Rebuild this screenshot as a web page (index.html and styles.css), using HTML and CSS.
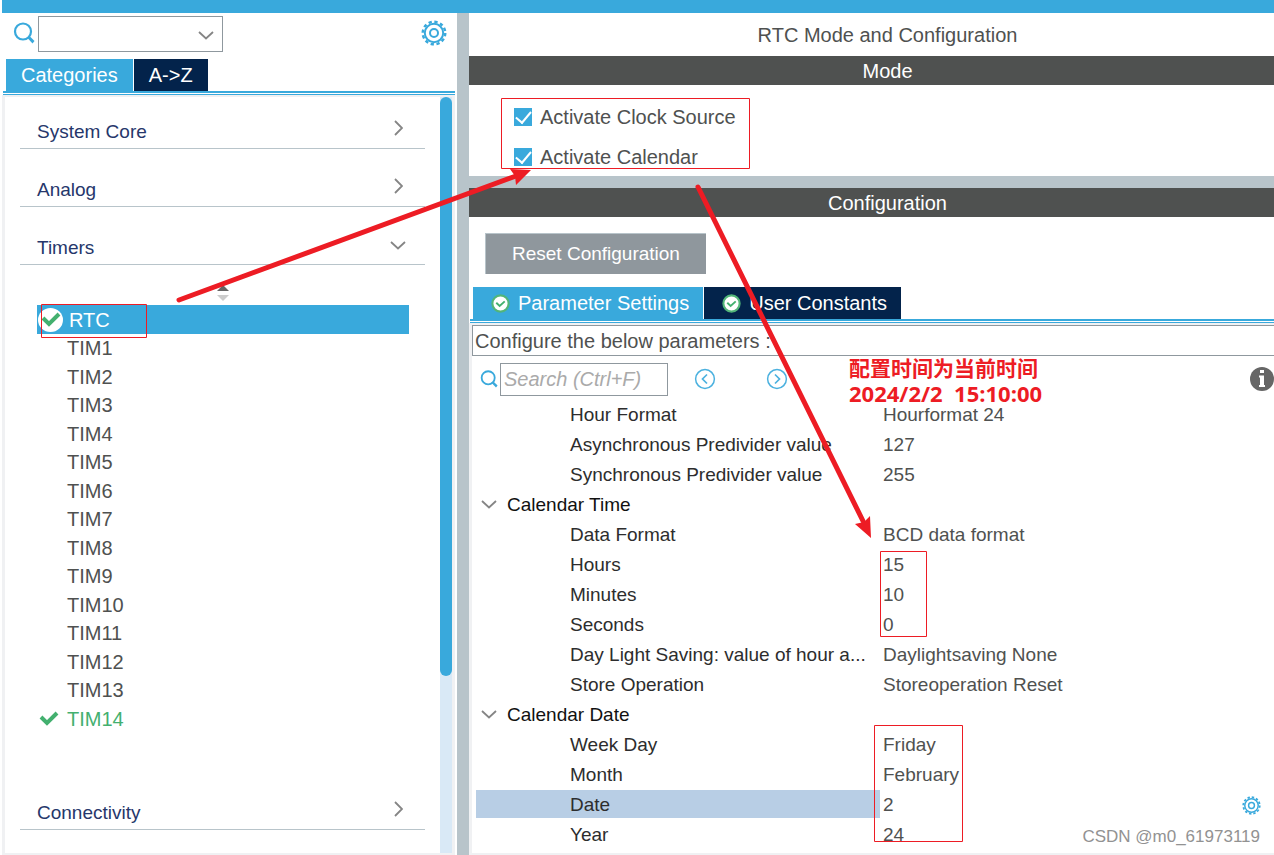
FILE: index.html
```html
<!DOCTYPE html>
<html lang="en">
<head>
<meta charset="utf-8">
<title>RTC Mode and Configuration</title>
<link rel="stylesheet" href="styles.css">
</head>
<body>
<svg class="defs" aria-hidden="true">
  <symbol id="search" viewBox="0 0 22 22"><circle cx="10" cy="9.500" r="8" fill="none" stroke="#39a9dc" stroke-width="2.200"/><path d="M14 15.500l2.500-1.500 5 5-2 2.500z" fill="#39a9dc"/></symbol>
  <symbol id="gear" viewBox="0 0 26 26"><circle cx="13" cy="13" r="11.300" fill="none" stroke="#39a9dc" stroke-width="2.400" stroke-dasharray="3.300 2.617"/><circle cx="13" cy="13" r="9.200" fill="none" stroke="#39a9dc" stroke-width="2"/><circle cx="13" cy="13" r="4" fill="none" stroke="#39a9dc" stroke-width="2"/></symbol>
  <symbol id="down" viewBox="0 0 16 9"><path d="M1 1l7 6.500L15 1" fill="none" stroke="#858585" stroke-width="1.800"/></symbol>
  <symbol id="right" viewBox="0 0 9 16"><path d="M1 1l7 7-7 7" fill="none" stroke="#858585" stroke-width="1.800"/></symbol>
  <symbol id="tick" viewBox="0 0 20 16"><path d="M2 6l6 6L18 2" fill="none" stroke="#43b06f" stroke-width="4"/></symbol>
  <symbol id="ok" viewBox="0 0 18 18"><circle cx="9" cy="9" r="7.700" fill="#fff" stroke="#52b579" stroke-width="2"/><path d="M5 8.300l3.200 3L13 7" fill="none" stroke="#43b06f" stroke-width="1.800"/></symbol>
  <symbol id="prev" viewBox="0 0 22 22"><circle cx="11" cy="11" r="9.400" fill="none" stroke="#4bb1df" stroke-width="1.500"/><path d="M13 6.500L8.500 11l4.500 4.500" fill="none" stroke="#4bb1df" stroke-width="1.700"/></symbol>
</svg>
<div class="app">
  <header class="topbar"></header>
  <aside class="sidebar">
    <div class="finder">
      <svg class="ic-search"><use href="#search"/></svg>
      <span class="combo"><select aria-label="Find peripheral"><option></option></select><svg class="chev-down"><use href="#down"/></svg></span>
      <button class="icon-btn finder-gear" aria-label="Settings"><svg class="ic-gear"><use href="#gear"/></svg></button>
    </div>
    <div class="tabs side-tabs"><button class="tab active">Categories</button><button class="tab">A-&gt;Z</button></div>
    <div class="side-body">
      <nav class="tree">
        <button class="category">System Core<svg class="chev-right"><use href="#right"/></svg></button>
        <button class="category">Analog<svg class="chev-right"><use href="#right"/></svg></button>
        <button class="category">Timers<svg class="chev-down"><use href="#down"/></svg></button>
        <div class="timers">
          <button class="sorter" aria-label="Sort"><svg viewBox="0 0 12 16"><path d="M6 0l6 6H0z" fill="#666"/><path d="M0 10h12l-6 6z" fill="#ccc"/></svg></button>
          <ul>
            <li><button class="item selected"><span class="mark round"><svg class="ic-tick"><use href="#tick"/></svg></span>RTC</button></li>
            <li><button class="item">TIM1</button></li>
            <li><button class="item">TIM2</button></li>
            <li><button class="item">TIM3</button></li>
            <li><button class="item">TIM4</button></li>
            <li><button class="item">TIM5</button></li>
            <li><button class="item">TIM6</button></li>
            <li><button class="item">TIM7</button></li>
            <li><button class="item">TIM8</button></li>
            <li><button class="item">TIM9</button></li>
            <li><button class="item">TIM10</button></li>
            <li><button class="item">TIM11</button></li>
            <li><button class="item">TIM12</button></li>
            <li><button class="item">TIM13</button></li>
            <li><button class="item enabled"><span class="mark"><svg class="ic-tick"><use href="#tick"/></svg></span>TIM14</button></li>
          </ul>
        </div>
        <button class="category">Connectivity<svg class="chev-right"><use href="#right"/></svg></button>
      </nav>
      <div class="track"><div class="thumb"></div></div>
    </div>
  </aside>
  <div class="splitter"></div>
  <main class="pane">
    <h1>RTC Mode and Configuration</h1>
    <h2>Mode</h2>
    <div class="mode">
      <label><input type="checkbox" checked>Activate Clock Source</label>
      <label><input type="checkbox" checked>Activate Calendar</label>
    </div>
    <div class="hsplit"></div>
    <h2>Configuration</h2>
    <div class="actions"><button class="reset">Reset Configuration</button></div>
    <div class="tabs param-tabs">
      <button class="tab active"><svg class="ic-ok"><use href="#ok"/></svg>Parameter Settings</button><button class="tab"><svg class="ic-ok"><use href="#ok"/></svg>User Constants</button>
    </div>
    <section class="params">
      <p class="hint">Configure the below parameters :</p>
      <div class="search-row">
        <svg class="ic-small"><use href="#search"/></svg>
        <input type="text" placeholder="Search (Ctrl+F)" aria-label="Search parameters">
        <button class="icon-btn prev" aria-label="Previous"><svg class="ic-nav"><use href="#prev"/></svg></button>
        <button class="icon-btn next" aria-label="Next"><svg class="ic-nav flip"><use href="#prev"/></svg></button>
        <button class="icon-btn info" aria-label="Information"><svg class="ic-info" viewBox="0 0 26 26"><circle cx="13" cy="13" r="12" fill="#666"/><path d="M11 4h4v3h-4zM10 9.500h5V19h1v2h-6v-2h1v-7.500h-1z" fill="#fff"/></svg></button>
      </div>
      <table>
        <colgroup><col class="c-name"><col></colgroup>
        <tbody>
          <tr><td>Hour Format</td><td>Hourformat 24</td></tr>
          <tr><td>Asynchronous Predivider value</td><td>127</td></tr>
          <tr><td>Synchronous Predivider value</td><td>255</td></tr>
          <tr class="group"><th colspan="2"><svg class="chev-down"><use href="#down"/></svg>Calendar Time</th></tr>
          <tr><td>Data Format</td><td>BCD data format</td></tr>
          <tr><td>Hours</td><td>15</td></tr>
          <tr><td>Minutes</td><td>10</td></tr>
          <tr><td>Seconds</td><td>0</td></tr>
          <tr><td>Day Light Saving: value of hour a...</td><td>Daylightsaving None</td></tr>
          <tr><td>Store Operation</td><td>Storeoperation Reset</td></tr>
          <tr class="group"><th colspan="2"><svg class="chev-down"><use href="#down"/></svg>Calendar Date</th></tr>
          <tr><td>Week Day</td><td>Friday</td></tr>
          <tr><td>Month</td><td>February</td></tr>
          <tr class="current"><td>Date</td><td><div class="value">2<button class="icon-btn" aria-label="Edit"><svg class="ic-cog"><use href="#gear"/></svg></button></div></td></tr>
          <tr><td>Year</td><td>24</td></tr>
        </tbody>
      </table>
    </section>
  </main>
  <svg class="marks" width="1274" height="855" viewBox="0 0 1274 855" aria-hidden="true">
    <g fill="none" stroke="#ed1c24">
      <path d="M501.500 98.500h248v70h-248zM41.500 304.500h105v33h-105zM880.500 551.500h46v85h-46zM874.500 725.500h88v116h-88z"/>
      <path d="M179 300L516 176M698 187L863 521" stroke-width="5" stroke-linecap="round"/>
    </g>
    <path d="M531 170l-21-1 5 7 1 9zM871 538l-16-14 9-2 6-6z" fill="#ed1c24"/>
  </svg>
  <div class="note"><div lang="zh-CN">配置时间为当前时间</div><div class="stamp">2024/2/2  15:10:00</div></div>
  <div class="credit">CSDN @m0_61973119</div>
</div>
</body>
</html>
```
FILE: styles.css
```css
* { box-sizing: border-box; }
body { margin: 0; background: #fff; color: #4f5150; font: 19px/24px "Liberation Sans", Arial, sans-serif; overflow: hidden; }
button, input, select { font: inherit; color: inherit; margin: 0; padding: 0; border: 0; border-radius: 0; background: none; }
button { text-align: left; }
svg { display: block; flex: none; }
ul { list-style: none; margin: 0; padding: 0; }
.defs { position: absolute; width: 0; height: 0; }
.app { position: relative; min-height: 100vh; display: grid; grid-template-columns: 457px 12px minmax(0, 1fr); grid-template-rows: 13px 1fr; }
.topbar { grid-column: 1 / -1; margin-left: 2px; background: #39a9dc; }
.splitter { background: #b8c4ca; }
.icon-btn { display: block; }

/* Sidebar */
.sidebar { display: flex; flex-direction: column; padding: 0 2px 0 2px; }
.finder { display: flex; align-items: flex-start; height: 46px; padding: 3px 8px 0 11px; }
.ic-search { width: 22px; height: 22px; margin: 6px 3px 0 0; }
.combo { position: relative; width: 185px; height: 36px; }
.combo select { width: 100%; height: 100%; appearance: none; border: 1px solid #8f989e; background: #fff; }
.combo svg { position: absolute; right: 9px; top: 15px; pointer-events: none; }
.finder-gear { margin: 4px 0 0 auto; }
.ic-gear { width: 26px; height: 26px; }
.chev-down { width: 16px; height: 9px; }
.chev-right { width: 9px; height: 16px; }
.tabs { display: flex; gap: 1px; height: 36px; padding-bottom: 4px; position: relative; }
.tabs::after { content: ""; position: absolute; left: 1px; right: 0; bottom: 0; height: 1px; border-top: 2px solid #39a9dc; border-bottom: 1px solid #39a9dc; background: #fff; }
.side-tabs { padding-left: 4px; }
.tab { display: flex; align-items: center; padding: 0 15px; background: #03234b; color: #fff; font-size: 20px; }
.tab.active { background: #39a9dc; }
.side-body { flex: 1; display: flex; border: solid #f0f1f3; border-width: 2px 3px 2px 3px; }
.tree { flex: 1; display: flex; flex-direction: column; padding: 18px 15px 23px; }
.category { display: flex; justify-content: space-between; align-items: center; height: 34px; margin-bottom: 24px; padding: 0 22px 0 17px; border-bottom: 1px solid #b8c4ca; color: #26376b; }
.category svg { margin-bottom: 8px; }
.category .chev-down { margin: 0 -3px 5px 0; }
.category:last-child { margin-bottom: 0; }
.timers { margin: -4px 16px 63px 17px; }
.sorter { display: block; margin: 0 auto 4px; }
.sorter svg { width: 12px; height: 16px; }
.item { position: relative; display: block; width: 100%; height: 28px; padding-left: 30px; font-size: 20px; line-height: 29px; }
li:nth-child(odd) .item { height: 29px; line-height: 30px; }
.item.selected { padding-left: 32px; background: #39a9dc; color: #fff; }
.item.enabled { color: #43b06f; }
.mark { position: absolute; left: 1px; top: 3px; width: 25px; height: 24px; display: grid; place-items: center; }
.mark:not(.round) { width: 22px; }
.round { border-radius: 50%; background: #fff; }
.ic-tick { width: 20px; height: 16px; }
.track { width: 12px; background: #d9e9f6; }
.thumb { height: 579px; border-radius: 6px; background: #39a9dc; }

/* Configuration pane */
.pane { display: flex; flex-direction: column; }
h1, h2 { margin: 0; padding-left: 32px; font-size: 20px; font-weight: normal; text-align: center; }
h1 { height: 43px; line-height: 45px; }
h2 { height: 29px; line-height: 30px; background: #4f5150; color: #fff; }
.mode { display: flex; flex-direction: column; gap: 16px; height: 91px; padding: 20px 45px 0; font-size: 20px; }
.mode label { display: flex; align-items: center; gap: 8px; height: 24px; }
.mode input { appearance: none; width: 18px; height: 18px; background: #39a9dc; display: grid; place-items: center; }
.mode input:checked::before { content: ""; width: 7px; height: 13px; margin-bottom: 3px; border: solid #fff; border-width: 0 2px 2px 0; transform: rotate(40deg); }
.hsplit { height: 12px; background: #b8c4ca; }
.actions { padding: 16px 16px 13px; }
.reset { display: block; height: 41px; padding: 0 26px; border: 1px solid #b8c4ca; border-width: 1px 0 0 1px; background: #8f979d; color: #fff; }
.param-tabs { padding-left: 4px; }
.param-tabs .tab { padding: 0 14px 0 18px; gap: 8px; }
.ic-ok { width: 19px; height: 19px; }
.params { flex: 1; border: solid #f0f1f3; border-width: 2px 0 2px 3px; }
.hint { margin: 0; height: 31px; padding-left: 2px; border: 1px solid #8f989e; border-right: 0; font-size: 20px; line-height: 31px; }
.search-row { display: flex; align-items: center; height: 46px; padding-left: 8px; }
.ic-small { width: 18px; height: 18px; margin-right: 2px; }
.search-row input { width: 168px; height: 33px; padding: 0 3px; border: 1px solid #8f989e; background: #fff; font-size: 20px; }
.search-row input::placeholder { color: #aaa; font-style: italic; opacity: 1; }
.ic-nav { width: 22px; height: 22px; }
.flip { transform: scaleX(-1); }
.prev { margin-left: 26px; }
.next { margin-left: 50px; }
.info { margin: 0 -1px 0 auto; }
.ic-info { width: 26px; height: 26px; }
table { width: 100%; table-layout: fixed; border-collapse: collapse; margin-top: -2px; }
.c-name { width: 408px; }
td, th { height: 30px; padding: 0; font-weight: normal; text-align: left; white-space: nowrap; }
td:first-child { padding-left: 98px; color: #2d2d2d; }
td:last-child { padding-left: 3px; }
th { color: #111; }
th svg { display: inline-block; margin: 0 10px 3px 9px; vertical-align: middle; }
.current td:first-child { background: linear-gradient(#b8cee5, #b8cee5) 4px 0 / 100% 28px no-repeat; }
.value { display: flex; align-items: center; justify-content: space-between; padding-right: 13px; }
.ic-cog { width: 19px; height: 19px; }

/* Annotation layer */
.marks { position: absolute; left: 0; top: 0; pointer-events: none; }
.note { position: absolute; left: 849px; top: 354px; color: #ed1c24; font: bold 21px/26px "Noto Sans CJK SC", sans-serif; white-space: pre; }
.stamp { font-family: "Open Sans", sans-serif; font-size: 22px; }
.credit { position: absolute; right: 14px; bottom: 6px; color: #929292; font-size: 17px; }
```
